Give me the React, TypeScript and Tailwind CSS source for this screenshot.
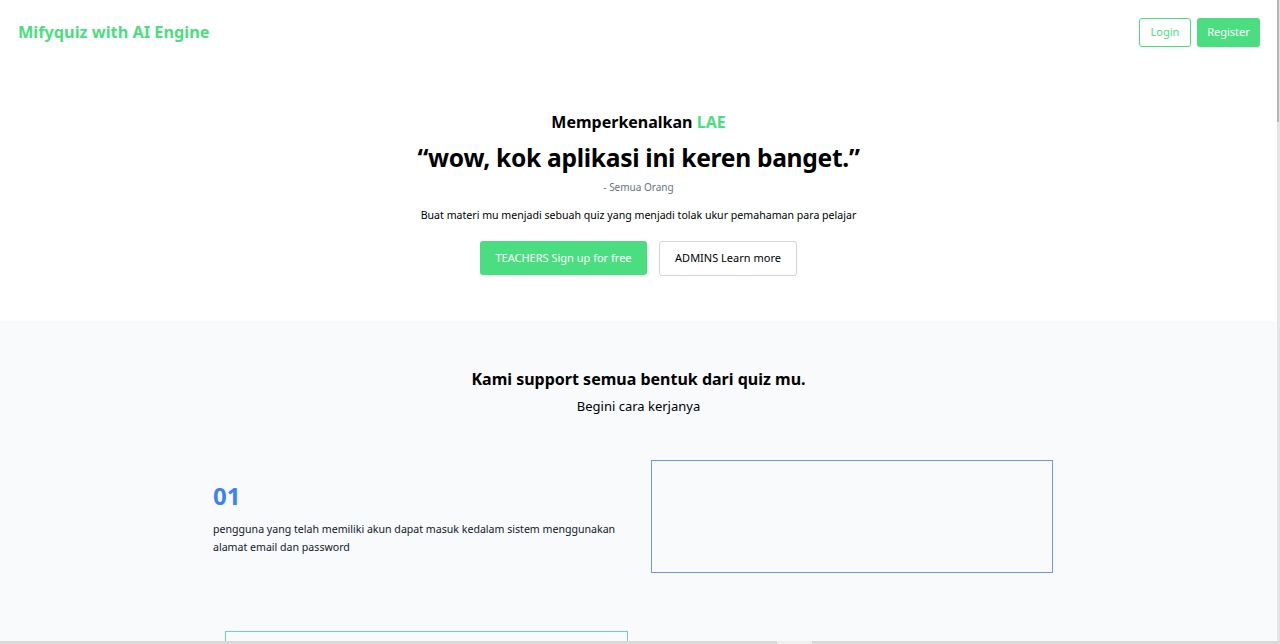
export default function App() {
  return (
    <div
      className="relative h-[644px] w-[1280px] overflow-hidden bg-white text-black"
      style={{ fontFamily: '"Noto Sans", "Open Sans", sans-serif' }}
    >
      <div className="w-[1277px]">
        {/* header */}
        <header className="flex h-[65px] items-center justify-between pl-[18px] pr-[17px]">
          <h1 className="text-[16.3px] font-bold text-[#4ade80]">Mifyquiz with AI Engine</h1>
          <div className="flex items-center gap-[6px]">
            <button className="h-[29px] w-[52px] rounded-[3px] border border-[#4ade80] bg-white text-[11px] text-[#4ade80]">
              Login
            </button>
            <button className="h-[29px] w-[63px] rounded-[3px] bg-[#4ade80] text-[11px] text-white">
              Register
            </button>
          </div>
        </header>

        {/* hero */}
        <section className="flex h-[256px] flex-col items-center pt-[45px]">
          <h2 className="text-[16px] font-bold leading-[24px]">
            Memperkenalkan <span className="text-[#4ade80]">LAE</span>
          </h2>
          <p className="mt-[8px] text-[24.6px] font-bold leading-[32px] tracking-[-0.3px]">
            “wow, kok aplikasi ini keren banget.”
          </p>
          <p className="mt-[5px] text-[10px] leading-[16px] text-gray-500">- Semua Orang</p>
          <p className="mt-[12px] text-[10.6px] leading-[16px]">
            Buat materi mu menjadi sebuah quiz yang menjadi tolak ukur pemahaman para pelajar
          </p>
          <div className="mt-[18px] flex gap-[12px]">
            <button className="h-[34px] w-[167px] rounded-[3px] bg-[#4ade80] text-[11px] text-white">
              TEACHERS Sign up for free
            </button>
            <button className="h-[35px] w-[138px] rounded-[3px] border border-gray-300 bg-white text-[11px] text-black">
              ADMINS Learn more
            </button>
          </div>
        </section>

        {/* how it works */}
        <section className="h-[323px] bg-[#f8fafc] pt-[46px]">
          <div className="flex flex-col items-center">
            <h3 className="text-[16px] font-bold leading-[24px]">Kami support semua bentuk dari quiz mu.</h3>
            <p className="mt-[5px] text-[13px] leading-[20px]">Begini cara kerjanya</p>
          </div>

          <div className="mt-[44px] grid grid-cols-[418px_402px] gap-x-[20px] pl-[213px]">
            <div className="flex flex-col justify-center pt-[3px]">
              <p className="text-[24px] font-bold leading-[30px] text-[#3b82f6]">01</p>
              <p className="mt-[9px] text-[10.6px] leading-[18px] text-gray-900">
                pengguna yang telah memiliki akun dapat masuk kedalam sistem menggunakan alamat email dan password
              </p>
            </div>
            <div className="h-[113px] border border-[#6b9be6]" />
          </div>

          <div className="mt-[58px] pl-[225px]">
            <div className="h-[113px] w-[403px] border border-[#62d8c4]" />
          </div>
        </section>
      </div>

      {/* scrollbars */}
      <div className="absolute right-0 top-0 h-[641px] w-[3px] bg-[#e5e5e5]">
        <div className="h-[122px] w-[2px] bg-[#b5b5b5]" />
      </div>
      <div className="absolute bottom-0 left-0 flex h-[3px] w-[1280px] bg-[#d9d9d9]">
        <div className="ml-[777px] h-[3px] w-[35px] bg-[#efefef]" />
      </div>
    </div>
  );
}
